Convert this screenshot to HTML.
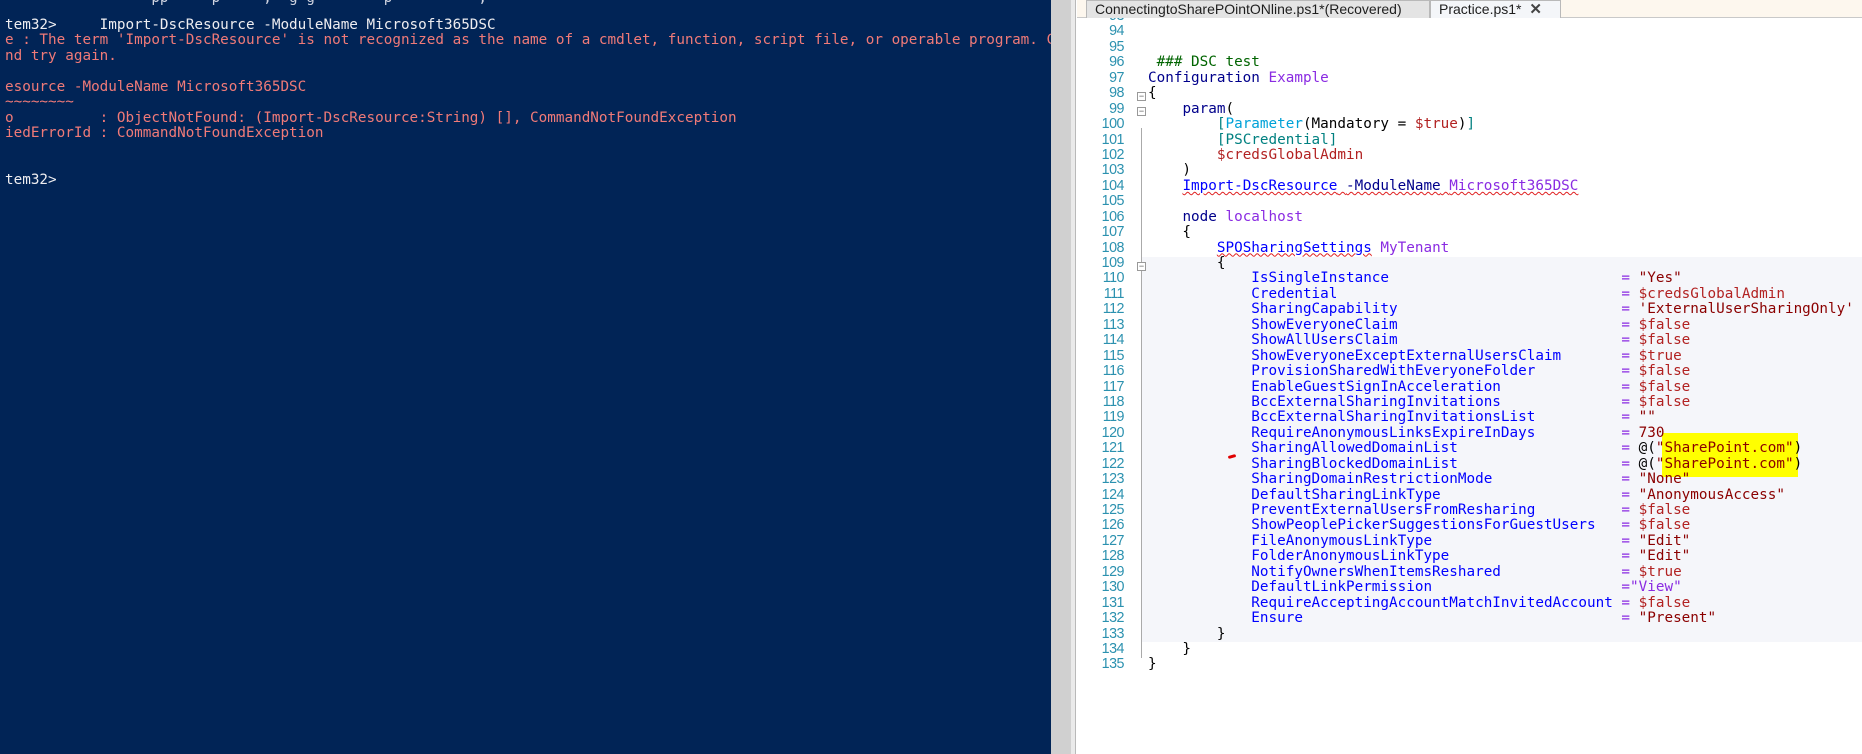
<!DOCTYPE html>
<html><head><meta charset="utf-8">
<style>
*{margin:0;padding:0;box-sizing:border-box}
body{width:1862px;height:754px;overflow:hidden;background:#fff;position:relative;font-family:"Liberation Mono",monospace}
#term{position:absolute;left:0;top:0;width:1051px;height:754px;background:#012456;overflow:hidden}
#term pre{position:absolute;left:5px;top:17.5px;font-size:14.3px;line-height:15.5px;color:#eeedf0;white-space:pre}
#term pre.top{top:-9px;color:#cfd3e0}
.err{color:#f07a78}
#gray{position:absolute;left:1051px;top:0;width:20px;height:754px;background:#d0d0d0}
#gray2{position:absolute;left:1071px;top:0;width:5px;height:754px;background:#eaeaea;border-right:1px solid #b9b9b9}
#tabs{position:absolute;left:1077px;top:0;width:785px;height:18px;background:#fdf7ee;border-bottom:1px solid #c9c9c9}
.tab{position:absolute;top:0;height:18px;font-family:"Liberation Sans",sans-serif;font-size:14px;line-height:17px;color:#1e1e1e;padding-left:8px;white-space:nowrap;overflow:hidden}
#ed{position:absolute;left:1077px;top:18px;width:785px;height:736px;background:#fff;overflow:hidden}
#hl{position:absolute;left:1142px;top:257px;width:720px;height:385px;background:#f5f6fa}
.yel{position:absolute;background:#ffff00}
#nums{position:absolute;left:1080px;width:44px;top:9px;text-align:right;font-size:14.3px;line-height:15.44px;color:#2b91af;white-space:pre;font-family:"Liberation Sans",sans-serif;letter-spacing:-0.5px}
#code{position:absolute;left:1148px;top:9px;font-size:14.3px;line-height:15.44px;color:#000;white-space:pre}
.kw{color:#00008b}.pu{color:#8a2be2}.cm{color:#006400}.cmd{color:#0000ff}.pr{color:#0000ff}
.st{color:#8b0000}.va{color:#b22222}.ty{color:#008080}.at{color:#00a2d8}
.sq{text-decoration:underline wavy #e02020;text-decoration-thickness:1px}
.fold{position:absolute;left:1137px;width:9px;height:9px;border:1px solid #999;background:#fff;font-size:9px;line-height:6px;text-align:center;color:#555;font-family:"Liberation Sans",sans-serif}
.vl{position:absolute;left:1141px;width:1px;background:#aaa}
</style></head><body>
<div id="term"><pre class="top">                 pp     p     ,  g g        p          ,</pre><pre><span>tem32&gt;     Import-DscResource -ModuleName Microsoft365DSC</span>
<span class="err">e : The term 'Import-DscResource' is not recognized as the name of a cmdlet, function, script file, or operable program. Ch</span>
<span class="err">nd try again.</span>

<span class="err">esource -ModuleName Microsoft365DSC</span>
<span class="err">~~~~~~~~</span>
<span class="err">o          : ObjectNotFound: (Import-DscResource:String) [], CommandNotFoundException</span>
<span class="err">iedErrorId : CommandNotFoundException</span>


<span>tem32&gt;</span></pre></div>
<div id="gray"></div><div id="gray2"></div>
<div id="ed"></div>
<div id="hl"></div>
<div class="yel" style="left:1662px;top:433px;width:136px;height:44px"></div>
<div style="position:absolute;left:1228px;top:455px;width:8px;height:3px;background:#e00000;border-radius:2px;transform:rotate(-15deg)"></div>
<div class="vl" style="top:128px;height:530px"></div>
<div class="fold" style="top:92px">−</div>
<div class="fold" style="top:107px">−</div>
<div class="fold" style="top:262px">−</div>
<pre id="nums">93
94
95
96
97
98
99
100
101
102
103
104
105
106
107
108
109
110
111
112
113
114
115
116
117
118
119
120
121
122
123
124
125
126
127
128
129
130
131
132
133
134
135</pre>
<pre id="code">



 <span class="cm">### DSC test</span>
<span class="kw">Configuration</span> <span class="pu">Example</span>
{
    <span class="kw">param</span>(
        <span class="ty">[</span><span class="at">Parameter</span>(Mandatory = <span class="va">$true</span>)<span class="ty">]</span>
        <span class="ty">[PSCredential]</span>
        <span class="va">$credsGlobalAdmin</span>
    )
    <span class="cmd sq">Import-DscResource</span><span class="sq"> </span><span class="kw sq">-ModuleName</span><span class="sq"> </span><span class="pu sq">Microsoft365DSC</span>

    <span class="kw">node</span> <span class="pu">localhost</span>
    {
        <span class="cmd sq">SPOSharingSettings</span> <span class="pu">MyTenant</span>
        {
            <span class="pr">IsSingleInstance                          </span> <span class="pu">=</span> <span class="st">"Yes"</span>
            <span class="pr">Credential                                </span> <span class="pu">=</span> <span class="va">$credsGlobalAdmin</span>
            <span class="pr">SharingCapability                         </span> <span class="pu">=</span> <span class="st">'ExternalUserSharingOnly'</span>
            <span class="pr">ShowEveryoneClaim                         </span> <span class="pu">=</span> <span class="va">$false</span>
            <span class="pr">ShowAllUsersClaim                         </span> <span class="pu">=</span> <span class="va">$false</span>
            <span class="pr">ShowEveryoneExceptExternalUsersClaim      </span> <span class="pu">=</span> <span class="va">$true</span>
            <span class="pr">ProvisionSharedWithEveryoneFolder         </span> <span class="pu">=</span> <span class="va">$false</span>
            <span class="pr">EnableGuestSignInAcceleration             </span> <span class="pu">=</span> <span class="va">$false</span>
            <span class="pr">BccExternalSharingInvitations             </span> <span class="pu">=</span> <span class="va">$false</span>
            <span class="pr">BccExternalSharingInvitationsList         </span> <span class="pu">=</span> <span class="st">""</span>
            <span class="pr">RequireAnonymousLinksExpireInDays         </span> <span class="pu">=</span> <span class="st">730</span>
            <span class="pr">SharingAllowedDomainList                  </span> <span class="pu">=</span> @(<span class="st">"SharePoint.com"</span>)
            <span class="pr">SharingBlockedDomainList                  </span> <span class="pu">=</span> @(<span class="st">"SharePoint.com"</span>)
            <span class="pr">SharingDomainRestrictionMode              </span> <span class="pu">=</span> <span class="st">"None"</span>
            <span class="pr">DefaultSharingLinkType                    </span> <span class="pu">=</span> <span class="st">"AnonymousAccess"</span>
            <span class="pr">PreventExternalUsersFromResharing         </span> <span class="pu">=</span> <span class="va">$false</span>
            <span class="pr">ShowPeoplePickerSuggestionsForGuestUsers  </span> <span class="pu">=</span> <span class="va">$false</span>
            <span class="pr">FileAnonymousLinkType                     </span> <span class="pu">=</span> <span class="st">"Edit"</span>
            <span class="pr">FolderAnonymousLinkType                   </span> <span class="pu">=</span> <span class="st">"Edit"</span>
            <span class="pr">NotifyOwnersWhenItemsReshared             </span> <span class="pu">=</span> <span class="va">$true</span>
            <span class="pr">DefaultLinkPermission                     </span> <span class="pu">=</span><span class="pu">"View"</span>
            <span class="pr">RequireAcceptingAccountMatchInvitedAccount</span> <span class="pu">=</span> <span class="va">$false</span>
            <span class="pr">Ensure                                    </span> <span class="pu">=</span> <span class="st">"Present"</span>
        }
    }
}</pre>
<div id="tabs">
<div class="tab" style="left:9px;width:344px;background:#e4e4e4;border:1px solid #b9b9b9;border-bottom:none">ConnectingtoSharePOintONline.ps1*(Recovered)</div>
<div class="tab" style="left:353px;width:131px;background:#f4f6f9;border:1px solid #b9b9b9;border-bottom:none">Practice.ps1* <b style="font-size:15px;color:#444;margin-left:4px">✕</b></div>
</div>
</body></html>
